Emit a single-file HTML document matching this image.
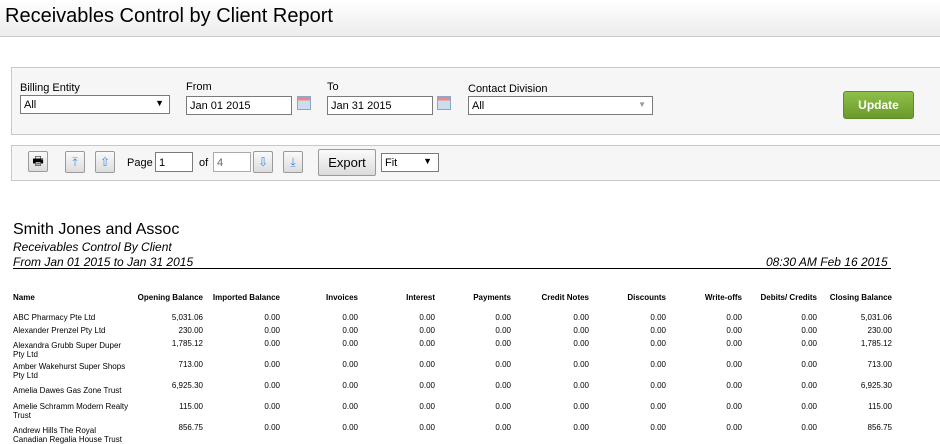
<!DOCTYPE html>
<html><head><style>
*{margin:0;padding:0;box-sizing:border-box}
body{width:940px;height:438px;overflow:hidden;background:#fff;font-family:"Liberation Sans",sans-serif;position:relative;color:#000}
.a{position:absolute}
.hdr{left:0;top:0;width:940px;height:37px;background:linear-gradient(#fff,#ececec);border-bottom:1px solid #ccc}
.hdr h1{position:absolute;left:5px;top:5px;font-size:20px;font-weight:normal}
.panel{background:#f6f6f6;border:1px solid #c8c8c8;border-right:none}
.lbl{font-size:11px}
.inp{background:#fff;border:1px solid #7a7a7a;font-size:11px;padding:3px 3px 0;height:19px}
.cal{width:14px;height:14px;border:1px solid #8aa8c8;background:linear-gradient(#e88 0 30%,#cde 30%)}
.btn{border:1px solid #9a9a9a;border-radius:2px;background:linear-gradient(#fafafa,#dcdcdc)}
.t{font-size:8px;position:absolute;white-space:nowrap}
.h{font-weight:bold}
.r{text-align:right;width:70px}
</style></head><body>
<div class="a hdr"><h1>Receivables Control by Client Report</h1></div>

<div class="a panel" style="left:11px;top:67px;width:929px;height:68px"></div>
<div class="a lbl" style="left:20px;top:82px">Billing Entity</div>
<div class="a inp" style="left:20px;top:95px;width:150px">All<span style="position:absolute;right:5px;top:2px;font-size:9px">▼</span></div>
<div class="a lbl" style="left:186px;top:81px">From</div>
<div class="a inp" style="left:186px;top:96px;width:106px">Jan 01 2015</div>
<div class="a cal" style="left:297px;top:96px"></div>
<div class="a lbl" style="left:327px;top:81px">To</div>
<div class="a inp" style="left:327px;top:96px;width:106px">Jan 31 2015</div>
<div class="a cal" style="left:437px;top:96px"></div>
<div class="a lbl" style="left:468px;top:83px">Contact Division</div>
<div class="a inp" style="left:468px;top:96px;width:185px">All<span style="position:absolute;right:6px;top:3px;font-size:8px;color:#999">▼</span></div>
<div class="a" style="left:843px;top:91px;width:71px;height:28px;border-radius:3px;background:linear-gradient(#8fbf4a,#6b9a2c);border:1px solid #5f8a28;color:#fff;font-weight:bold;font-size:12px;text-align:center;line-height:26px">Update</div>

<div class="a panel" style="left:11px;top:145px;width:929px;height:36px"></div>
<div class="a btn" style="left:28px;top:151px;width:20px;height:21px;font-size:12px;text-align:center;line-height:19px">🖶</div>
<div class="a btn" style="left:65px;top:151px;width:20px;height:22px;color:#3a8ee0;font-size:12px;text-align:center;line-height:20px">⤒</div>
<div class="a btn" style="left:95px;top:151px;width:20px;height:22px;color:#3a8ee0;font-size:12px;text-align:center;line-height:20px">⇧</div>
<div class="a lbl" style="left:127px;top:157px">Page</div>
<div class="a inp" style="left:155px;top:152px;width:38px;height:20px;padding-top:4px">1</div>
<div class="a lbl" style="left:199px;top:157px">of</div>
<div class="a inp" style="left:213px;top:152px;width:38px;height:20px;padding-top:4px;color:#666;border-color:#aaa">4</div>
<div class="a btn" style="left:253px;top:151px;width:20px;height:22px;color:#3a8ee0;font-size:12px;text-align:center;line-height:20px">⇩</div>
<div class="a btn" style="left:283px;top:151px;width:20px;height:22px;color:#3a8ee0;font-size:12px;text-align:center;line-height:20px">⤓</div>
<div class="a btn" style="left:318px;top:149px;width:58px;height:27px;font-size:13px;text-align:center;line-height:25px">Export</div>
<div class="a inp" style="left:381px;top:153px;width:58px;height:19px">Fit<span style="position:absolute;right:6px;top:2px;font-size:9px">▼</span></div>

<div class="a" style="left:13px;top:221px;font-size:16px">Smith Jones and Assoc</div>
<div class="a" style="left:13px;top:240px;font-size:12px;font-style:italic">Receivables Control By Client</div>
<div class="a" style="left:13px;top:255px;font-size:12px;font-style:italic">From Jan 01 2015 to Jan 31 2015</div>
<div class="a" style="left:766px;top:255px;font-size:12px;font-style:italic">08:30 AM Feb 16 2015</div>
<div class="a" style="left:13px;top:268px;width:878px;border-top:1px solid #000"></div>

<div class="t h" style="left:13px;top:293px">Name</div>
<div id="cols"></div>
<script>
var heads=["Opening Balance","Imported Balance","Invoices","Interest","Payments","Credit Notes","Discounts","Write-offs","Debits/ Credits","Closing Balance"];
var rights=[203,280,358,435,511,589,666,742,817,892];
var rows=[["ABC Pharmacy Pte Ltd","",313,"5,031.06"],["Alexander Prenzel Pty Ltd","",326,"230.00"],["Alexandra Grubb Super Duper","Pty Ltd",339,"1,785.12"],["Amber Wakehurst Super Shops","Pty Ltd",360,"713.00"],["Amelia Dawes Gas Zone Trust","",381,"6,925.30"],["Amelie Schramm Modern Realty","Trust",402,"115.00"],["Andrew Hills The Royal","Canadian Regalia House Trust",423,"856.75"]];
var h="";
heads.forEach(function(t,i){h+='<div class="t h r" style="left:'+(rights[i]-70)+'px;top:293px">'+t+'</div>';});
var ny=[313,326,341,362,386,402,426];
rows.forEach(function(r,k){
 h+='<div class="t" style="left:13px;top:'+ny[k]+'px;line-height:9px">'+r[0]+(r[1]?'<br>'+r[1]:'')+'</div>';
 rights.forEach(function(x,i){var v=(i==0||i==9)?r[3]:"0.00";h+='<div class="t r" style="left:'+(x-70)+'px;top:'+r[2]+'px">'+v+'</div>';});
});
document.getElementById("cols").innerHTML=h;
</script>
</body></html>
